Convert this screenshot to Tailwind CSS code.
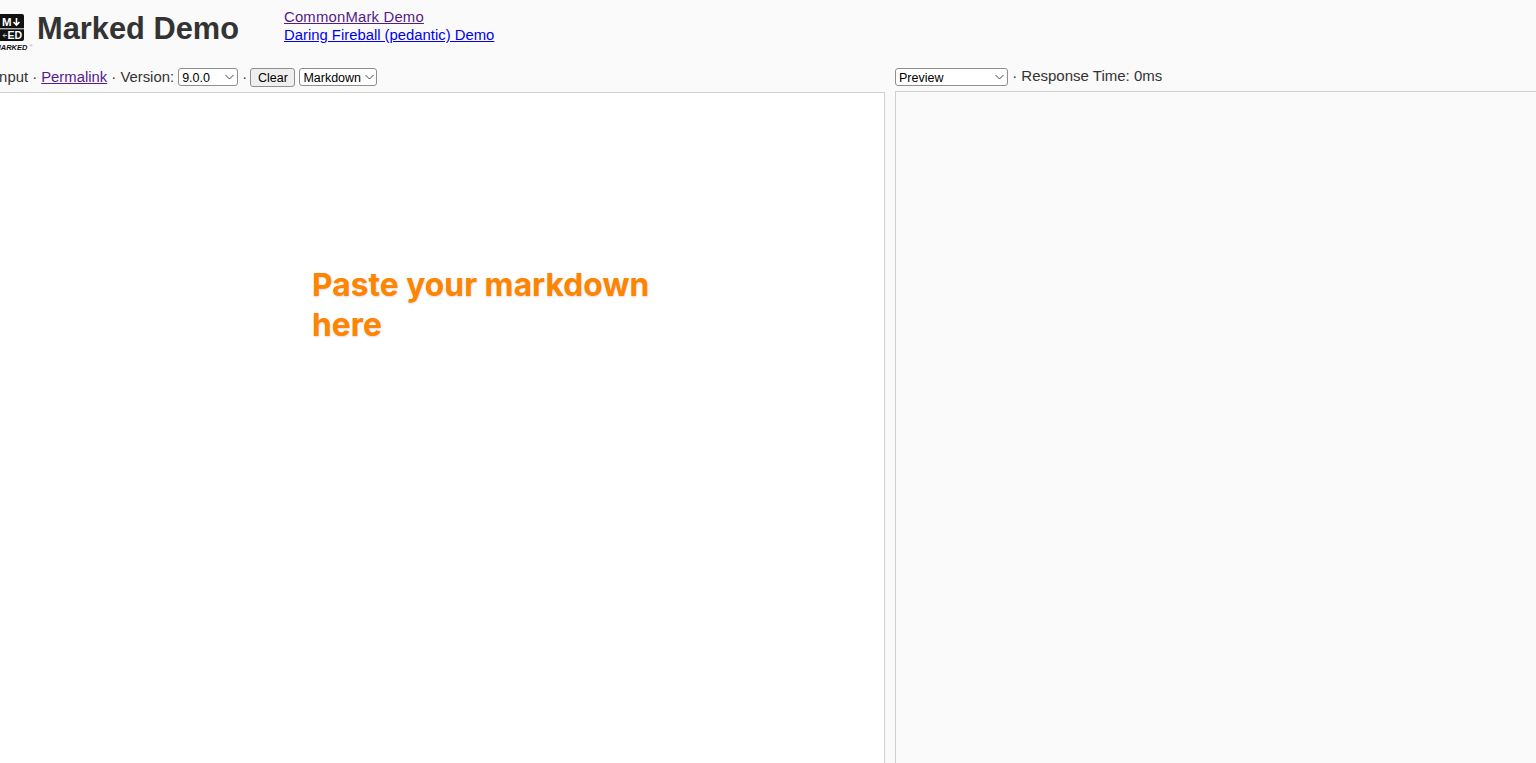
<!DOCTYPE html>
<html lang="en">
<head>
    <meta charset="UTF-8">
    <meta name="viewport" content="width=device-width, initial-scale=1.0">
    <title>Marked Demo</title>
    <script src="https://cdn.jsdelivr.net/npm/@tailwindcss/browser@4"></script>
</head>
<body class="bg-[#fafafa] overflow-hidden font-['Liberation_Sans',Arial,sans-serif] text-[#333]">

    <div class="h-[763px] w-[1536px] flex flex-col overflow-hidden">

        <!-- header -->
        <header class="h-[66px] shrink-0 flex items-start">
            <svg class="w-[40px] h-[52px] shrink-0 mt-[5px] -ml-[6px]" viewBox="0 0 40 52" fill="none">
                <rect x="0" y="9" width="30" height="27" rx="2" fill="#111"/>
                <rect x="0" y="23.300" width="30" height="1" fill="#eee"/>
                <text x="8" y="21" font-family="Liberation Sans, sans-serif" font-size="11.5" font-weight="700" fill="#fff">M</text>
                <path d="M22.500 13v7M19.500 17l3 3 3-3" stroke="#fff" stroke-width="1.600"/>
                <path d="M9 30.500h4M11 28.500l-2 2 2 2" stroke="#bbb" stroke-width="1"/>
                <text x="13.500" y="34" font-family="Liberation Sans, sans-serif" font-size="10.500" font-weight="700" fill="#fff">ED</text>
                <text x="0.500" y="44.500" font-family="Liberation Sans, sans-serif" font-size="7.500" font-weight="700" font-style="italic" fill="#111">MARKED</text>
                <text x="35.500" y="42" font-family="Liberation Sans, sans-serif" font-size="4" fill="#888">®</text>
            </svg>
            <h1 class="ml-[3px] mt-[11px] text-[30.8px] leading-[36px] font-bold text-[#333] whitespace-nowrap">Marked Demo</h1>
            <div class="ml-[45px] mt-[8px] flex flex-col text-[14.85px] leading-[18px]">
                <a href="#" class="underline tracking-[0.2px] text-[#551a8b]">CommonMark Demo</a>
                <a href="#" class="underline text-[#0000ee]">Daring Fireball (pedantic) Demo</a>
            </div>
        </header>

        <!-- panes -->
        <main class="flex flex-1 min-h-0">
            <section class="w-[885px] shrink-0 flex flex-col">
                <div class="h-[26px] pb-[4px] flex items-center text-[14.85px] whitespace-nowrap -ml-[5px]">
                    <span>Input ·&nbsp;</span>
                    <a href="#" class="underline text-[#551a8b]">Permalink</a>
                    <span>&nbsp;· Version:&nbsp;</span>
                    <div class="relative w-[60px] h-[18px]">
                        <select class="block w-full h-full bg-white border border-[#8f8f8f] rounded-[3px] text-[12.500px] text-black pl-[3px] appearance-none">
                            <option>9.0.0</option>
                        </select>
                        <svg class="absolute right-[4px] top-[6px] w-[9px] h-[6px] pointer-events-none" viewBox="0 0 9 6" fill="none"><path d="M0.500 1l4 4 4-4" stroke="#444" stroke-width="1"/></svg>
                    </div>
                    <span>&nbsp;·&nbsp;</span>
                    <button class="w-[45px] h-[19px] -ml-[1px] bg-[#efefef] border border-[#8f8f8f] rounded-[3px] text-[12.500px] text-black">Clear</button>
                    <div class="relative ml-[4px] w-[78px] h-[18px]">
                        <select class="block w-full h-full bg-white border border-[#8f8f8f] rounded-[3px] text-[12.500px] text-black pl-[3px] appearance-none">
                            <option>Markdown</option>
                        </select>
                        <svg class="absolute right-[3px] top-[6px] w-[9px] h-[6px] pointer-events-none" viewBox="0 0 9 6" fill="none"><path d="M0.500 1l4 4 4-4" stroke="#444" stroke-width="1"/></svg>
                    </div>
                </div>
                <div class="relative flex-1 bg-white border-t border-r border-[#cfcfcf]">
                    <p class="absolute left-[312px] top-[172px] w-[360px] font-['Inter',sans-serif] font-bold text-[31.8px] leading-[40px] text-[#ff8400] [text-shadow:0_1px_2px_rgba(0,0,0,0.15)]">Paste your markdown here</p>
                </div>
            </section>

            <section class="flex-1 ml-[10px] flex flex-col">
                <div class="h-[25px] pb-[4px] flex items-center text-[15px] whitespace-nowrap">
                    <div class="relative w-[113px] h-[18px]">
                        <select class="block w-full h-full bg-white border border-[#8f8f8f] rounded-[3px] text-[12.500px] text-black pl-[3px] appearance-none">
                            <option>Preview</option>
                        </select>
                        <svg class="absolute right-[4px] top-[6px] w-[9px] h-[6px] pointer-events-none" viewBox="0 0 9 6" fill="none"><path d="M0.500 1l4 4 4-4" stroke="#444" stroke-width="1"/></svg>
                    </div>
                    <span>&nbsp;· Response Time: 0ms</span>
                </div>
                <div class="flex-1 border-t border-l border-[#cfcfcf] bg-[#fafafa]"></div>
            </section>
        </main>
    </div>

</body>
</html>
